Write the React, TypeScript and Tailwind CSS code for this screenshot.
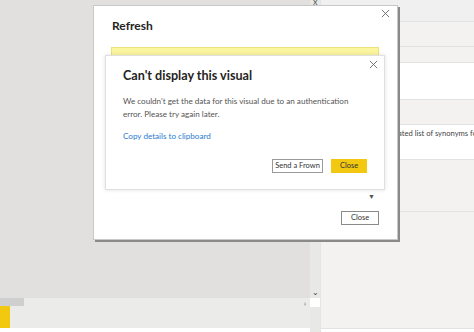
import React from "react";

const X = ({ size = 10, color = "#555" }: { size?: number; color?: string }) => (
  <svg width={size} height={size} viewBox="0 0 10 10">
    <path d="M1 1 L9 9 M9 1 L1 9" stroke={color} strokeWidth="1" fill="none" />
  </svg>
);

export default function App() {
  return (
    <div
      className="relative w-[474px] h-[332px] overflow-hidden bg-white"
      style={{ fontFamily: 'Lato, "Open Sans", sans-serif' }}
    >
      <div className="flex h-full">
        {/* left canvas */}
        <div className="flex flex-col w-[310px] shrink-0">
          <div className="h-[298px] bg-[#e1e0df]" />
          <div className="h-[8px] bg-[#ebebea] flex">
            <div className="w-[24px] bg-[#cfcfcf]" />
          </div>
          <div className="h-[22px] bg-[#ebebea] flex">
            <div className="w-[10px] bg-[#f2c811]" />
          </div>
          <div className="flex-1 bg-white" />
        </div>
        {/* scrollbar */}
        <div className="flex flex-col w-[10px] shrink-0 bg-[#e8e8e7]">
          <div className="h-[287px]" />
          <div className="h-[11px] text-[8px] leading-[11px] text-[#444] text-center">⌄</div>
          <div className="h-[9px] bg-white" />
        </div>
        {/* right panel */}
        <div className="flex-1 min-w-0 overflow-hidden flex flex-col bg-[#f3f2f1] border-l border-[#e4e4e4]">
          <div className="h-[22px] bg-[#f0f0f0] border-b border-[#e2e2e2]" />
          <div className="h-[25px] border-b border-[#e2e2e2]" />
          <div className="h-[16px] border-b border-[#e2e2e2]" />
          <div className="h-[37px] bg-white border-b border-[#e2e2e2]" />
          <div className="h-[25px] border-b border-[#e2e2e2]" />
          <div className="h-[35px] bg-white border-b border-[#e2e2e2] text-[7.6px] text-[#444] pl-[77px] pt-[3px] whitespace-nowrap">
            ated list of synonyms fo
          </div>
          <div className="h-[52px] border-b border-[#e2e2e2]" />
          <div className="flex-1 border-b border-[#e2e2e2]" />
          <div className="h-[3px] bg-white" />
        </div>
      </div>

      {/* Refresh dialog */}
      <div className="absolute left-[93px] top-[5px] w-[305px] h-[235px] bg-white border border-[#c8c8c8] shadow-[2px_2px_0_#8a8a8a]">
        <div className="absolute right-[7px] top-[3px]">
          <X size={9} color="#666" />
        </div>
        <div className="pl-[18px] pt-[11px] text-[12px] font-bold text-[#252423] leading-[18px]">Refresh</div>
        <div className="ml-[17px] mt-[12px] w-[268px] h-[20px] bg-[#fbf5a0] border border-[#ece27a]" />
        <div className="absolute right-[22px] top-[185px] text-[7px] text-[#555]">▼</div>
        <div className="absolute right-[18px] top-[205px] w-[38px] h-[14px] border border-[#8a8a8a] bg-white text-[7.5px] leading-[12px] text-center text-[#333]">
          Close
        </div>
      </div>

      {/* Error dialog */}
      <div className="absolute left-[105px] top-[55px] w-[280px] h-[135px] bg-white border border-[#e0e0e0] shadow-[0_0_4px_rgba(0,0,0,0.12)]">
        <div className="absolute right-[6px] top-[4px]">
          <X size={9} color="#666" />
        </div>
        <div className="pl-[17px] pt-[11px] text-[12.6px] font-bold text-[#252423] leading-[18px] whitespace-nowrap">
          Can't display this visual
        </div>
        <div className="pl-[17px] pt-[10px] text-[8.1px] leading-[13px] text-[#555] whitespace-nowrap">
          We couldn't get the data for this visual due to an authentication
          <br />
          error. Please try again later.
        </div>
        <div className="pl-[17px] pt-[9px] text-[8.1px] text-[#2b7cd3] whitespace-nowrap">Copy details to clipboard</div>
        <div className="absolute left-[166px] top-[103px] flex gap-[8px]">
          <div className="w-[51px] h-[14px] border border-[#9a9a9a] bg-white text-[7.5px] leading-[12px] text-center text-[#333] whitespace-nowrap">
            Send a Frown
          </div>
          <div className="w-[36px] h-[14px] bg-[#f2c811] text-[7.5px] leading-[14px] text-center text-[#333]">
            Close
          </div>
        </div>
      </div>

      <div className="absolute left-[313px] top-[-3px] text-[9px] leading-[9px] text-[#555]">x</div>
      <div className="absolute left-[304px] top-[298px] text-[7px] text-[#444]">›</div>
    </div>
  );
}
